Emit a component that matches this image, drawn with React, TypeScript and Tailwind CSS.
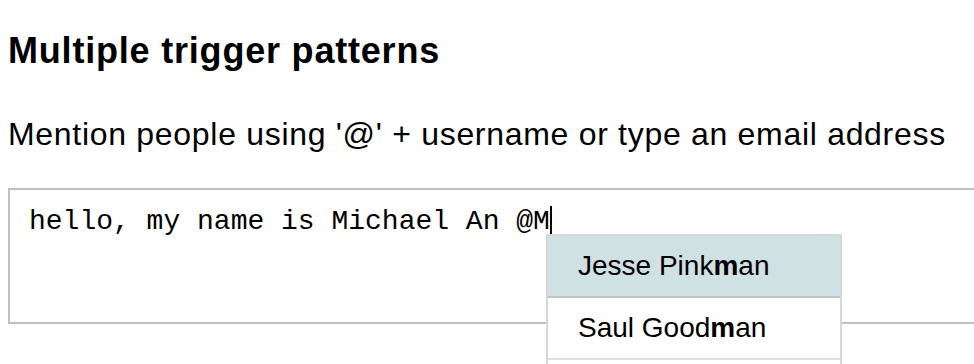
import React from "react"

const people = [
  { pre: "Jesse Pink", hit: "m", post: "an", active: true },
  { pre: "Saul Good", hit: "m", post: "an", active: false },
  { pre: "Walter White", hit: "", post: "", active: false },
]

export default function App() {
  return (
    <div className="min-h-screen bg-white pl-2 pt-[30px] text-black [font-family:'Liberation_Sans',Arial,sans-serif]">
      <h2 className="text-[36px] font-bold leading-[41px] tracking-[0.8px]">Multiple trigger patterns</h2>
      <p className="mt-[45px] text-[32px] leading-[37px] tracking-[0.7px]">
        Mention people using '@' + username or type an email address
      </p>

      <div className="relative mt-[35px] h-[136px] w-[1000px] border-2 border-[#c0c0c0] bg-white">
        <div className="flex pl-[19px] pt-[16px] text-[28px] leading-[32px] [font-family:'Liberation_Mono','Courier_New',monospace]">
          <span className="whitespace-pre">hello, my name is Michael An @M</span>
          <span className="h-[28px] w-[2px] bg-black" />
        </div>

        <ul className="absolute left-[536px] top-[44px] w-[296px] border-x-2 border-t-2 border-[#d6d6d6] bg-white text-[28px] leading-[32px]">
          {people.map((p) => (
            <li
              key={p.pre}
              className={
                p.active
                  ? "h-[62px] border-b-2 border-[#b8c8cc] bg-[#d0e1e4] pl-[30px] pt-[14px]"
                  : "h-[62px] border-b-2 border-[#dedede] bg-white pl-[30px] pt-[14px]"
              }
            >
              {p.pre}
              {p.hit && <b>{p.hit}</b>}
              {p.post}
            </li>
          ))}
        </ul>
      </div>
    </div>
  )
}
